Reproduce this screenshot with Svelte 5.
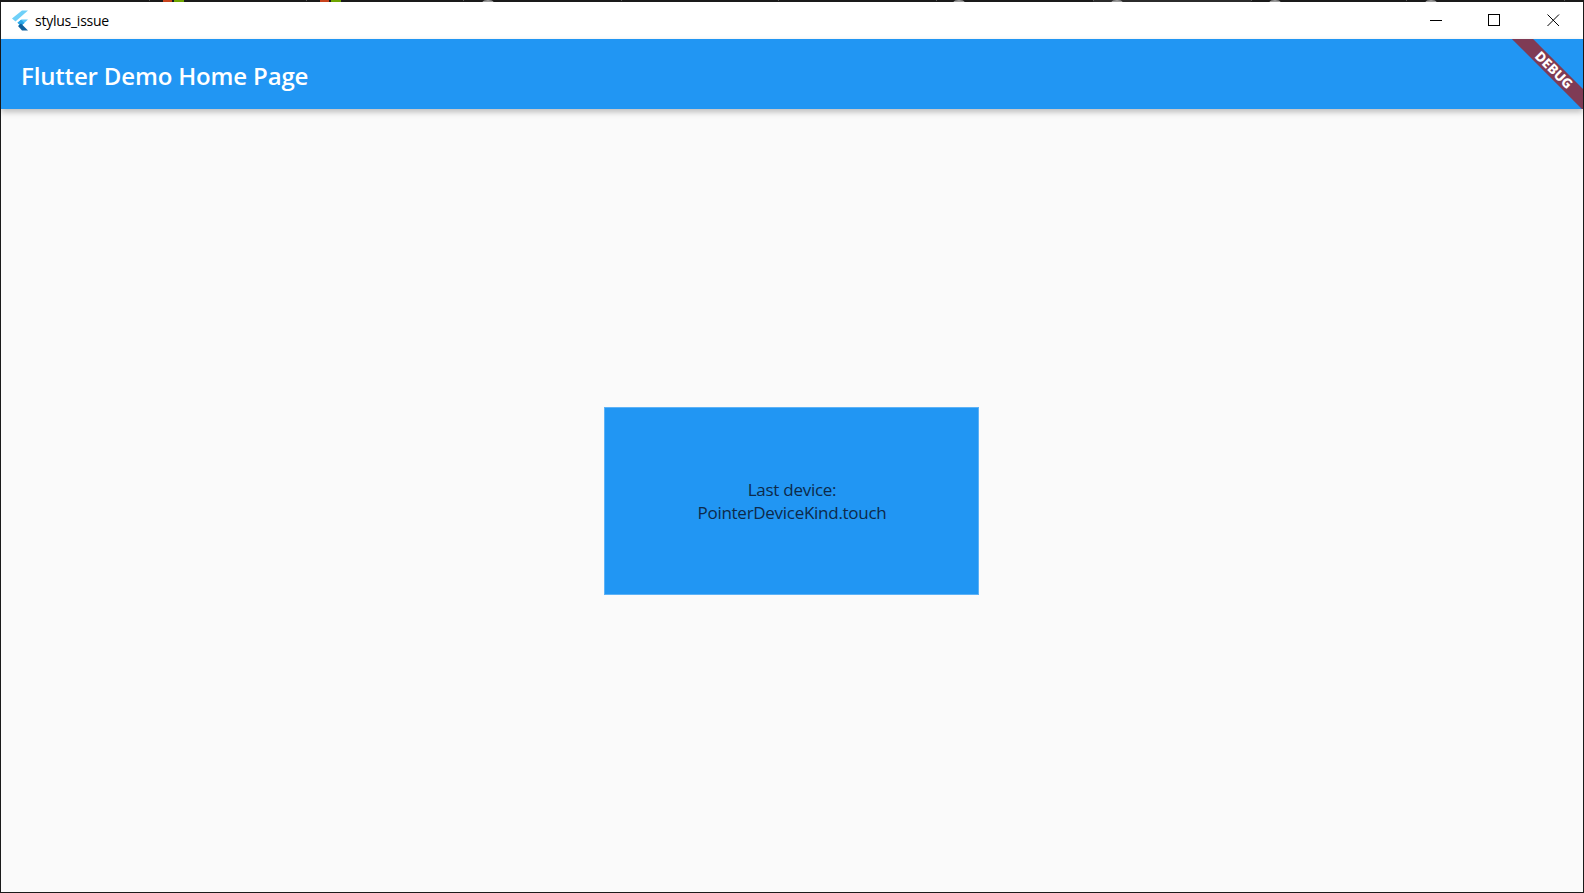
<script>
  const ticks = [149, 306, 463, 621, 778, 936, 1093, 1251, 1406, 1564];
  const bumps = [488, 959, 1117, 1275, 1431];
  const flags = [163, 320];
</script>

<div class="window">
  <svg class="strip" width="1584" height="2" viewBox="0 0 1584 2" aria-hidden="true">
    <rect x="1093" y="0" width="158" height="2" fill="#2b2b2b" />
    {#each ticks as x}
      <rect {x} y="0" width="1" height="1" fill="#555" />
    {/each}
    {#each bumps as x}
      <ellipse cx={x} cy="2" rx="5.5" ry="2" fill="#9a9a9a" />
    {/each}
    {#each flags as x}
      <rect {x} y="0" width="9" height="2" fill="#c8431c" />
      <rect x={x + 11} y="0" width="10" height="2" fill="#6fa500" />
    {/each}
  </svg>

  <div class="frame">
    <header class="titlebar">
      <svg class="logo" width="18" height="21" viewBox="0 0 18 21" aria-hidden="true">
        <path d="M11 0.5h6L4.5 11.5 1 8.5z" fill="#6fd0f8" />
        <path d="M10.5 9.5h6.5L10 16 6.5 12.8z" fill="#54c5f8" />
        <path d="M6.5 12.8 10 9.8 13.5 13 10 16z" fill="#29a5e6" />
        <path d="M7 16 10 13.5 17 20.5H11z" fill="#0f5f9b" />
      </svg>
      <span class="name">stylus_issue</span>
      <div class="controls">
        <svg width="36" height="36" viewBox="0 0 36 36" aria-hidden="true"><path d="M12 18.5h12" stroke="#000" stroke-width="1" /></svg>
        <svg width="36" height="36" viewBox="0 0 36 36" aria-hidden="true"><rect x="12.5" y="12.5" width="11" height="11" fill="none" stroke="#000" stroke-width="1" /></svg>
        <svg width="36" height="36" viewBox="0 0 36 36" aria-hidden="true"><path d="M12.5 12.5l11.5 11.5M24 12.5 12.5 24" stroke="#000" stroke-width="1" fill="none" /></svg>
      </div>
    </header>

    <div class="appbar">
      <h1>Flutter Demo Home Page</h1>
      <div class="banner-clip">
        <div class="banner">DEBUG</div>
      </div>
    </div>

    <main class="body">
      <div class="box">
        <span>Last device:</span>
        <span>PointerDeviceKind.touch</span>
      </div>
    </main>
  </div>
</div>

<style>
  :global(body) {
    margin: 0;
    background: #fafafa;
  }

  .window {
    width: 1584px;
    height: 893px;
    display: flex;
    flex-direction: column;
    background: #1a1a1a;
    overflow: hidden;
    font-family: "Open Sans", "Noto Sans", sans-serif;
  }

  .strip {
    display: block;
    flex: none;
  }

  .frame {
    flex: 1;
    min-height: 0;
    display: flex;
    flex-direction: column;
    margin: 0 1px 1px;
    background: #fafafa;
  }

  .titlebar {
    flex: none;
    height: 37px;
    display: flex;
    align-items: center;
    background: #fff;
    padding-left: 10px;
    color: #000;
  }

  .logo {
    flex: none;
    margin-right: 6px;
  }

  .name {
    font-size: 14px;
    letter-spacing: -0.25px;
  }

  .controls {
    margin-left: auto;
    display: flex;
    gap: 22.5px;
    padding-right: 12.5px;
    margin-top: -1px;
  }

  .controls svg {
    display: block;
  }

  .appbar {
    flex: none;
    position: relative;
    z-index: 1;
    height: 70px;
    display: flex;
    align-items: center;
    padding-left: 20px;
    padding-top: 2px;
    box-sizing: border-box;
    background: #2196f3;
    box-shadow: 0 3px 6px rgba(0, 0, 0, 0.25);
  }

  h1 {
    margin: 0;
    font-size: 24px;
    font-weight: 600;
    letter-spacing: -0.16px;
    color: #fff;
  }

  .banner-clip {
    position: absolute;
    inset: 0;
    overflow: hidden;
    pointer-events: none;
  }

  .banner {
    position: absolute;
    left: 1492px;
    top: 22.5px;
    width: 120px;
    height: 15px;
    line-height: 15px;
    padding-left: 2px;
    box-sizing: border-box;
    text-align: center;
    background: #7f3b55;
    color: #fff;
    font-family: "Noto Sans", sans-serif;
    font-size: 13.5px;
    font-weight: 800;
    transform: rotate(45deg);
  }

  .body {
    flex: 1;
    min-height: 0;
    display: flex;
    align-items: center;
    justify-content: center;
    padding-right: 1px;
  }

  .box {
    width: 375px;
    height: 188px;
    margin-top: 1px;
    box-sizing: border-box;
    border: 1px solid #5db2f6;
    display: flex;
    flex-direction: column;
    align-items: center;
    justify-content: center;
    background: #2196f3;
    color: #0d2a4a;
    font-size: 17px;
    line-height: 23px;
    letter-spacing: -0.28px;
  }

  .box span {
    position: relative;
    left: 0.5px;
  }
</style>
